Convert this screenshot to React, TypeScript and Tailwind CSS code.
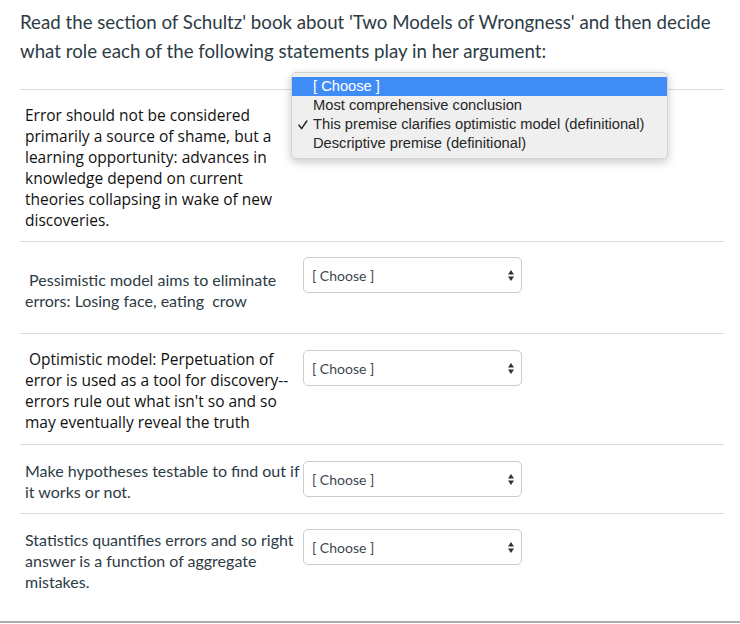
import React from 'react';

const lato = "font-['Lato','Liberation_Sans',sans-serif]";
const openSans = "font-['Open_Sans','Liberation_Sans',sans-serif]";

type Row = {
  lines: string[];
  calibri: boolean;
  textPad: string;
  selectPad: string;
  hideSelect?: boolean;
};

const rows: Row[] = [
  {
    lines: [
      'Error should not be considered',
      'primarily a source of shame, but a',
      'learning opportunity: advances in',
      'knowledge depend on current',
      'theories collapsing in wake of new',
      'discoveries.',
    ],
    calibri: true,
    textPad: 'pt-[15px] pb-[10px]',
    selectPad: 'pt-[16px]',
    hideSelect: true,
  },
  {
    lines: ['\u00a0Pessimistic model aims to eliminate', 'errors: Losing face, eating \u00a0crow'],
    calibri: false,
    textPad: 'pt-[27px] pb-[22px]',
    selectPad: 'pt-[15px]',
  },
  {
    lines: [
      '\u00a0Optimistic model: Perpetuation of',
      'error is used as a tool for discovery--',
      "errors rule out what isn't so and so",
      'may eventually reveal the truth',
    ],
    calibri: true,
    textPad: 'pt-[15px] pb-[11px]',
    selectPad: 'pt-[16px]',
  },
  {
    lines: ['Make hypotheses testable to find out if', 'it works or not.'],
    calibri: false,
    textPad: 'pt-[15px] pb-[10px]',
    selectPad: 'pt-[16px] pb-[16px]',
  },
  {
    lines: ['Statistics quantifies errors and so right', 'answer is a function of aggregate', 'mistakes.'],
    calibri: false,
    textPad: 'pt-[15px] pb-[29px]',
    selectPad: 'pt-[15px]',
  },
];

const Arrows: React.FC = () => (
  <svg width="6" height="11" viewBox="0 0 6 11" className="block">
    <path d="M3 0 L6 4.5 L0 4.5 Z" fill="#333" />
    <path d="M0 6.5 L6 6.5 L3 11 Z" fill="#333" />
  </svg>
);

const Check: React.FC = () => (
  <svg width="10" height="10" viewBox="0 0 10 10" className="absolute left-[6px] top-[5px]">
    <path d="M1 5.2 L3.6 8.6 L8.8 1" fill="none" stroke="#262626" strokeWidth="1.5" strokeLinecap="round" strokeLinejoin="round" />
  </svg>
);

const ChooseSelect: React.FC<{ hidden?: boolean }> = ({ hidden }) => (
  <div
    className={`flex h-[36px] w-[219px] items-center justify-between rounded-[5px] border border-[#c7cdd1] bg-white pl-[8px] pr-[7px] text-[14px] text-[#3b4750] ${lato} ${
      hidden ? 'invisible' : ''
    }`}
  >
    <span>[ Choose ]</span>
    <Arrows />
  </div>
);

const PopupMenu: React.FC = () => {
  const options = [
    'Most comprehensive conclusion',
    'This premise clarifies optimistic model (definitional)',
    'Descriptive premise (definitional)',
  ];
  return (
    <div className="absolute left-[291px] top-[72px] w-[377px] rounded-[5px] border border-[#d4d4d4] bg-[#efefef] pb-[5px] pt-[4px] font-['Liberation_Sans',Arial,sans-serif] text-[14.7px] text-[#262626] shadow-[0_3px_10px_rgba(0,0,0,0.22)]">
      <div className="flex h-[19px] items-center bg-[#3f8cf7] pl-[21px] text-white">[ Choose ]</div>
      {options.map((opt, i) => (
        <div key={opt} className="relative flex h-[19px] items-center pl-[21px]">
          {i === 1 && <Check />}
          {opt}
        </div>
      ))}
    </div>
  );
};

const App: React.FC = () => {
  return (
    <div className="relative h-[624px] w-[740px] overflow-hidden bg-white">
      <div className={`pl-[20px] pr-[10px] pt-[8px] text-[18.7px] leading-[29px] text-[#2d3b45] ${lato}`}>
        <div className="whitespace-nowrap">
          Read the section of Schultz' book about 'Two Models of Wrongness' and then decide
        </div>
        <div className="whitespace-nowrap">what role each of the following statements play in her argument:</div>
      </div>

      <div className="ml-[20px] mt-[23px] w-[704px]">
        {rows.map((row, i) => (
          <div key={i} className="flex border-t border-[#dcdcdc] pl-[5px]">
            <div
              className={`w-[277px] whitespace-nowrap leading-[21px] ${row.textPad} ${
                row.calibri ? `${openSans} text-[15.5px] text-[#111]` : `${lato} text-[16px] text-[#2d3b45]`
              }`}
            >
              {row.lines.map((l, j) => (
                <div key={j}>{l}</div>
              ))}
            </div>
            <div className={`ml-[1px] ${row.selectPad}`}>
              <ChooseSelect hidden={row.hideSelect} />
            </div>
          </div>
        ))}
      </div>

      <div className="h-[2px] w-full bg-[#ababab]" />

      <PopupMenu />
    </div>
  );
};

export default App;
